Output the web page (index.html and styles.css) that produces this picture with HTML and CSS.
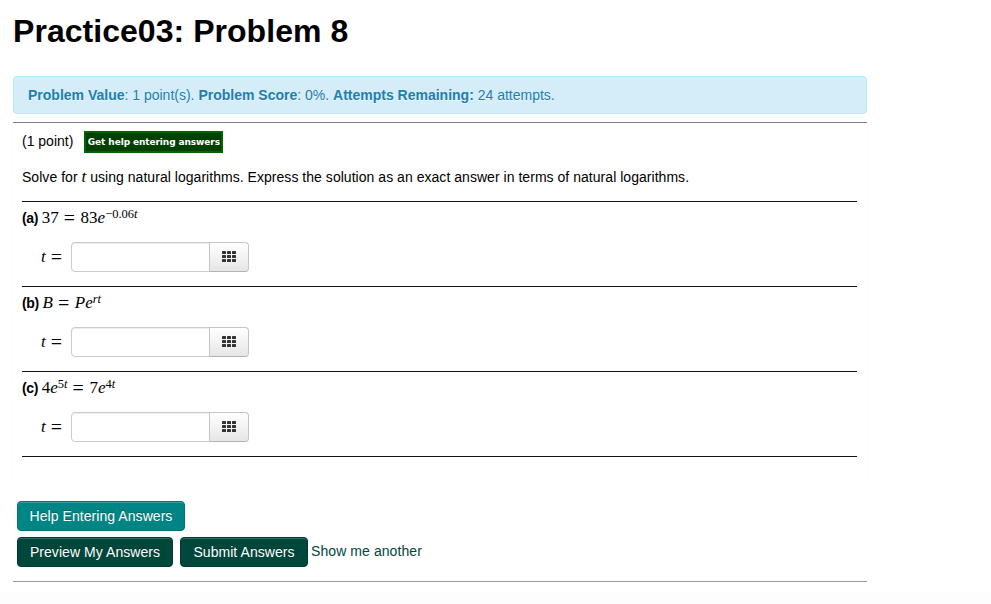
FILE: index.html
```html
<!DOCTYPE html>
<html lang="en">
<head>
    <meta charset="UTF-8">
    <meta name="viewport" content="width=device-width, initial-scale=1.0">
    <title>Practice03: Problem 8</title>
    <link rel="stylesheet" href="styles.css">
</head>
<body>
<svg class="sprite" width="0" height="0">
    <symbol id="grid-icon" viewBox="0 0 14 11">
        <g fill="#333">
            <rect x="0" y="0" width="4" height="3" rx="0.6"/><rect x="5" y="0" width="4" height="3" rx="0.6"/><rect x="10" y="0" width="4" height="3" rx="0.6"/>
            <rect x="0" y="4" width="4" height="3" rx="0.6"/><rect x="5" y="4" width="4" height="3" rx="0.6"/><rect x="10" y="4" width="4" height="3" rx="0.6"/>
            <rect x="0" y="8" width="4" height="3" rx="0.6"/><rect x="5" y="8" width="4" height="3" rx="0.6"/><rect x="10" y="8" width="4" height="3" rx="0.6"/>
        </g>
    </symbol>
</svg>
<div class="page">
    <h1 class="title">Practice03: Problem 8</h1>
    <div class="alert"><b>Problem Value</b>: 1 point(s). <b>Problem Score</b>: 0%. <b>Attempts Remaining:</b> 24 attempts.</div>

    <div class="problem">
        <div class="points">
            <span>(1 point)</span>
            <a class="help-badge"><span>Get help entering answers</span></a>
        </div>
        <p class="statement">Solve for <i class="var">t</i> using natural logarithms. Express the solution as an exact answer in terms of natural logarithms.</p>

        <div class="part">
            <div class="equation"><b>(a)</b> <span class="math">37<span class="eq">=</span>83<i>e</i><sup>−0.06<i>t</i></sup></span></div>
            <div class="answer">
                <span class="math"><i>t</i><span class="eq">=</span></span>
                <input class="field" type="text"><button class="keypad"><svg width="14" height="11"><use href="#grid-icon"/></svg></button>
            </div>
        </div>
        <div class="part">
            <div class="equation"><b>(b)</b> <span class="math"><i>B</i><span class="eq">=</span><i>Pe</i><sup><i>rt</i></sup></span></div>
            <div class="answer">
                <span class="math"><i>t</i><span class="eq">=</span></span>
                <input class="field" type="text"><button class="keypad"><svg width="14" height="11"><use href="#grid-icon"/></svg></button>
            </div>
        </div>
        <div class="part">
            <div class="equation"><b>(c)</b> <span class="math">4<i>e</i><sup>5<i>t</i></sup><span class="eq">=</span>7<i>e</i><sup>4<i>t</i></sup></span></div>
            <div class="answer">
                <span class="math"><i>t</i><span class="eq">=</span></span>
                <input class="field" type="text"><button class="keypad"><svg width="14" height="11"><use href="#grid-icon"/></svg></button>
            </div>
        </div>
    </div>

    <div class="actions">
        <div class="row"><button class="btn btn-info help">Help Entering Answers</button></div>
        <div class="row">
            <button class="btn btn-primary preview">Preview My Answers</button>
            <button class="btn btn-primary submit">Submit Answers</button>
            <a class="another">Show me another</a>
        </div>
    </div>
</div>
</body>
</html>
```
FILE: styles.css
```css
* {
    box-sizing: border-box;
}

body {
    margin: 0;
    height: 604px;
    overflow: hidden;
    background: linear-gradient(#fff 591px, #fdfdfd 591px);
    font-family: "Liberation Sans", Arial, sans-serif;
    font-size: 14px;
    line-height: 20px;
    color: #000;
}

.sprite {
    display: block;
}

.page {
    width: 854px;
    height: 571px;
    margin-left: 13px;
    margin-top: 11px;
    border-bottom: 1px solid #999;
}

.title {
    margin: 0;
    font-size: 32px;
    line-height: 40px;
    letter-spacing: 0.04px;
    white-space: nowrap;
}

.alert {
    height: 38px;
    margin-top: 25px;
    padding: 8px 14px;
    border: 1px solid #b3ecf2;
    border-radius: 4px;
    background-color: #d4edf9;
    color: #217fab;
    text-shadow: 0 1px 0 rgba(255, 255, 255, 0.5);
}

.problem {
    height: 359px;
    margin-top: 8px;
    padding: 8px 10px 0 9px;
    border-top: 1px solid #808080;
    box-shadow: 1px 0 0 #fcfcfc, -1px 0 0 #fcfcfc;
}

.points {
    display: flex;
    height: 22px;
    gap: 11px;
}

.help-badge {
    width: 139px;
    height: 22px;
    border: 2px solid #006400;
    background-color: #004000;
    color: #fff;
    font: bold 9px/18px "DejaVu Sans", sans-serif;
    letter-spacing: -0.1px;
    text-align: center;
    white-space: nowrap;
}

.statement {
    margin: 14px 0;
    letter-spacing: 0.037px;
    white-space: nowrap;
}

.var {
    font-family: "Liberation Serif", serif;
    font-size: 17px;
    line-height: 1;
}

.part {
    height: 85px;
    padding-top: 6px;
    border-top: 1px solid #111;
}

.part:last-child {
    height: 86px;
    border-bottom: 1px solid #111;
}

.equation {
    height: 20px;
    white-space: nowrap;
}

.equation b {
    letter-spacing: -0.4px;
}

.math {
    font-family: "Liberation Serif", serif;
    font-size: 17px;
    line-height: 1;
}

.math sup {
    font-size: 12.5px;
    line-height: 0;
    vertical-align: 5px;
}

.eq {
    margin: 0 5.5px 0 5px;
    font-size: 20px;
    line-height: 0;
    vertical-align: -2px;
}

.answer {
    display: flex;
    height: 30px;
    margin-top: 14px;
    padding-left: 19px;
    align-items: center;
}

.answer > .math {
    width: 30px;
    padding-bottom: 2px;
}

.answer .eq {
    margin: 0 0 0 5px;
}

.field {
    width: 139px;
    height: 30px;
    border: 1px solid #ccc;
    border-radius: 4px 0 0 4px;
    box-shadow: inset 0 1px 1px rgba(0, 0, 0, 0.075);
}

.keypad {
    display: flex;
    width: 40px;
    height: 30px;
    margin-left: -1px;
    padding: 0 0 2px;
    align-items: center;
    justify-content: center;
    border: 1px solid #c5c5c5;
    border-bottom-color: #b3b3b3;
    border-radius: 0 4px 4px 0;
    background: linear-gradient(#fff, #e6e6e6);
}

.actions {
    display: flex;
    flex-direction: column;
    gap: 6px;
    margin-top: 20px;
    padding-left: 4px;
}

.row {
    display: flex;
}

.btn {
    height: 30px;
    padding: 0;
    border: 1px solid;
    border-radius: 4px;
    color: #fff;
    font: 14px/20px "Liberation Sans", Arial, sans-serif;
    letter-spacing: 0.06px;
    text-shadow: 0 -1px 0 rgba(0, 0, 0, 0.25);
    box-shadow: inset 0 1px 0 rgba(255, 255, 255, 0.2);
}

.btn-info {
    border-color: #007474;
    background-color: #008585;
}

.btn-primary {
    border-color: #003b31;
    background-color: #00473b;
}

.help {
    width: 168px;
}

.preview {
    width: 156px;
}

.submit {
    width: 128px;
    margin-left: 7px;
}

.another {
    margin: 4px 0 0 3px;
    color: #00473b;
    letter-spacing: 0.08px;
}
```
